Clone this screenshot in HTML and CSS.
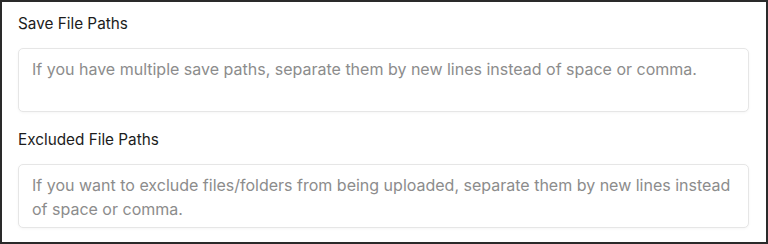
FILE: index.html
```html
<!DOCTYPE html>
<html>
<head>
<meta charset="utf-8">
<link rel="stylesheet" href="styles.css">
</head>
<body>
<div class="frame">
  <div class="field">
    <label class="label" for="save">Save File Paths</label>
    <textarea id="save" class="input" rows="2" placeholder="If you have multiple save paths, separate them by new lines instead of space or comma."></textarea>
  </div>
  <div class="field">
    <label class="label" for="excl">Excluded File Paths</label>
    <textarea id="excl" class="input" rows="2" placeholder="If you want to exclude files/folders from being uploaded, separate them by new lines instead of space or comma."></textarea>
  </div>
</div>
</body>
</html>
```
FILE: styles.css
```css
html, body {
  margin: 0;
  padding: 0;
  background: #ffffff;
}
.frame {
  box-sizing: border-box;
  width: 768px;
  height: 244px;
  border: 2px solid #2a2a2a;
  padding: 12px 17px 0 16px;
  display: flex;
  flex-direction: column;
  gap: 18px;
  font-family: "Inter", "Liberation Sans", sans-serif;
}
.field {
  display: flex;
  flex-direction: column;
  gap: 14px;
}
.label {
  font-size: 15.3px;
  line-height: 20px;
  color: #1c1c1c;
}
.input {
  box-sizing: border-box;
  width: 100%;
  height: 64px;
  margin: 0;
  border: 1px solid #e6e6e6;
  border-radius: 5px;
  box-shadow: 0 1px 3px rgba(0,0,0,0.04);
  padding: 8px 14px 6px 13px;
  font-family: inherit;
  font-size: 16px;
  line-height: 24px;
  color: #333;
  resize: none;
  outline: none;
  overflow: hidden;
  background: #fff;
}
.input::placeholder {
  color: #8c8c8c;
  opacity: 1;
}
```
